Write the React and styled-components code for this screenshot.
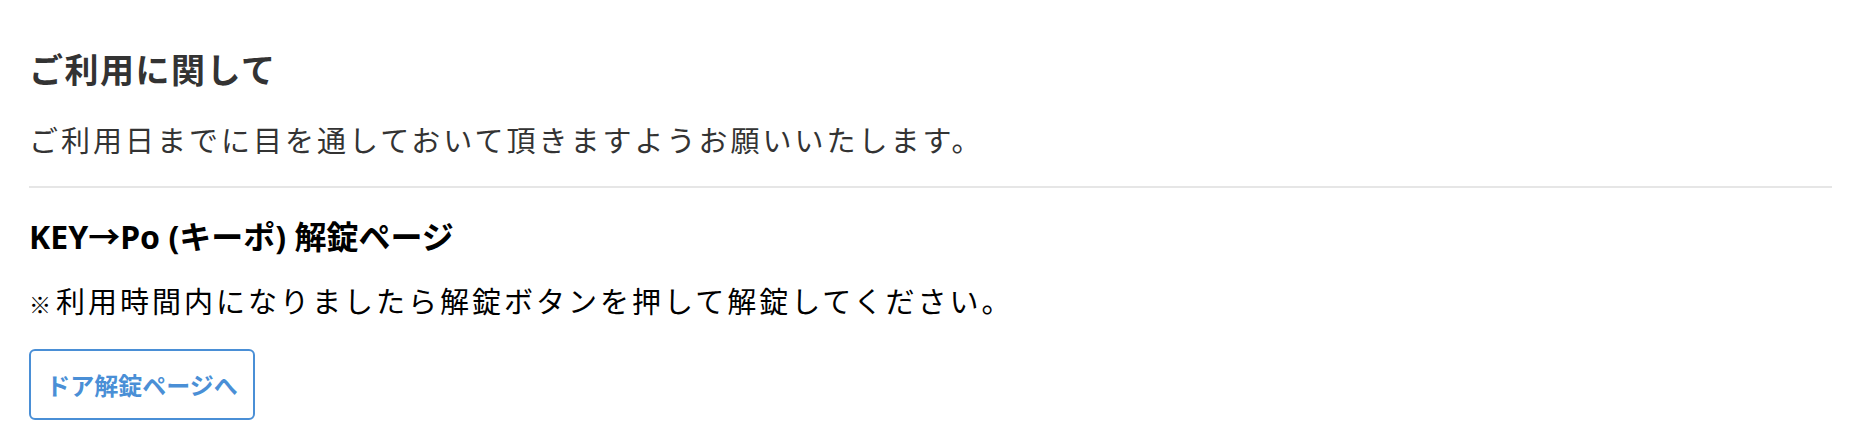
import React from "react";
import styled, { createGlobalStyle } from "styled-components";

const Global = createGlobalStyle`
  html, body { margin: 0; padding: 0; background: #fff; }
  body { font-family: "Noto Sans", "Noto Sans CJK JP", sans-serif; }
`;

const Page = styled.main`
  padding: 0 28px 0 29px;
  width: 1860px;
  box-sizing: border-box;
`;

const Section = styled.section`
  display: flex;
  flex-direction: column;
  align-items: flex-start;
  padding-top: ${(p) => p.$top}px;
  padding-bottom: ${(p) => p.$bottom}px;
  border-bottom: ${(p) => (p.$divider ? "2px solid #e6e6e6" : "none")};
  color: ${(p) => p.$color};
  font-family: "Noto Sans CJK JP", sans-serif;
`;

const Heading = styled.h2`
  margin: 0;
  font-size: 34px;
  font-weight: 700;
  line-height: 44px;
  letter-spacing: 1.5px;
`;

const SubHeading = styled.h3`
  margin: 0;
  font-family: "Noto Sans", "Noto Sans CJK JP", sans-serif;
  font-size: 32px;
  font-weight: 700;
  line-height: 42px;
`;

const Text = styled.p`
  margin: ${(p) => p.$mt}px 0 0;
  font-size: 29px;
  line-height: 40px;
  letter-spacing: 3px;
`;

const Note = styled.span`
  font-size: 22px;
  font-weight: 700;
  letter-spacing: 0;
  margin-right: 5px;
`;

const OutlineButton = styled.button`
  margin-top: 26px;
  width: 226px;
  height: 71px;
  box-sizing: border-box;
  border: 2px solid #4a8fd6;
  border-radius: 6px;
  background: #fff;
  color: #4a8fd6;
  font-family: "Noto Sans CJK JP", sans-serif;
  font-size: 24px;
  font-weight: 700;
  cursor: pointer;
  padding: 0;
`;

export default function App() {
  return (
    <>
      <Global />
      <Page>
        <Section $top={47} $bottom={27} $divider $color="#333">
          <Heading>ご利用に関して</Heading>
          <Text $mt={28}>ご利用日までに目を通しておいて頂きますようお願いいたします。</Text>
        </Section>
        <Section $top={28} $bottom={24} $color="#000">
          <SubHeading>KEY→Po (キーポ) 解錠ページ</SubHeading>
          <Text $mt={22}>
            <Note>※</Note>利用時間内になりましたら解錠ボタンを押して解錠してください。
          </Text>
          <OutlineButton>ドア解錠ページへ</OutlineButton>
        </Section>
      </Page>
    </>
  );
}
